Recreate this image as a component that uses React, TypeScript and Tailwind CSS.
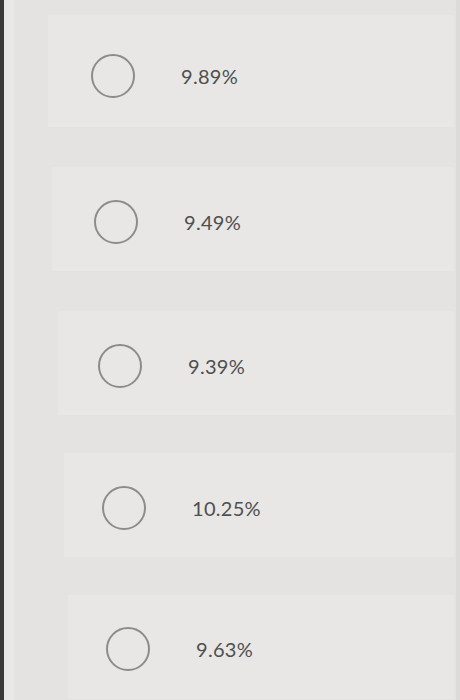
import React from "react";

const options = [
  { label: "9.89%", card: "ml-[34px] h-[112px] mt-[15px]", inner: "pl-[43px] pt-[10px]" },
  { label: "9.49%", card: "ml-[38px] h-[104px] mt-[40px]", inner: "pl-[42px] pt-[6px]" },
  { label: "9.39%", card: "ml-[44px] h-[104px] mt-[40px]", inner: "pl-[40px] pt-[6px]" },
  { label: "10.25%", card: "ml-[50px] h-[104px] mt-[38px]", inner: "pl-[38px] pt-[6px]" },
  { label: "9.63%", card: "ml-[54px] h-[104px] mt-[38px]", inner: "pl-[38px] pt-[4px]" },
];

export default function App() {
  return (
    <div className="w-[460px] h-[700px] overflow-hidden flex bg-[#e4e3e1]">
      <div className="w-[4px] h-full bg-[#3a3937]" />
      <div className="w-[10px] h-full bg-[#e9e8e6]" />
      <div className="flex-1 flex flex-col">
        {options.map((o) => (
          <div
            key={o.label}
            className={`${o.card} shrink-0 mr-[2px] bg-[#e8e7e5] flex items-center ${o.inner}`}
          >
            <div className="w-[44px] h-[44px] rounded-full border-2 border-[#8c8c8c] shrink-0" />
            <span
              className="ml-[46px] text-[20px] tracking-[0.3px] text-[#4f4f4f]"
              style={{ fontFamily: "Lato, 'Noto Sans', sans-serif" }}
            >
              {o.label}
            </span>
          </div>
        ))}
      </div>
      <div className="w-[4px] h-full bg-[#dcdbd9]" />
    </div>
  );
}
